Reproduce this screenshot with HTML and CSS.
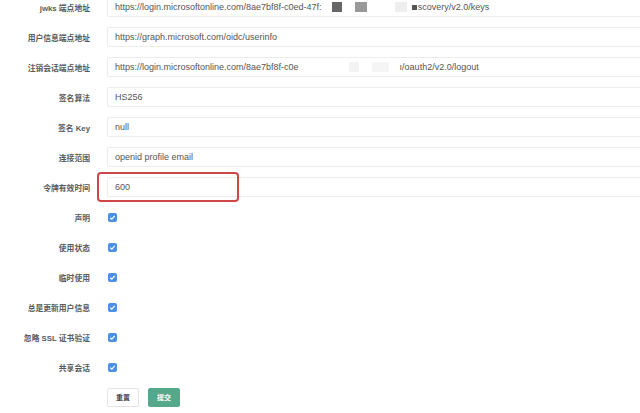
FILE: index.html
```html
<!DOCTYPE html>
<html lang="zh">
<head>
<meta charset="utf-8">
<link rel="stylesheet" href="styles.css">
</head>
<body>
<form class="form">
  <div class="row">
    <label class="label">jwks 端点地址</label>
    <div class="input"><span>https://login.microsoftonline.com/8ae7bf8f-c0ed-47f:</span><span class="blob b1"></span><span class="blob b2"></span><span class="blob b3"></span><span class="blob b4"></span><span>scovery/v2.0/keys</span></div>
  </div>
  <div class="row">
    <label class="label">用户信息端点地址</label>
    <div class="input"><span>https://graph.microsoft.com/oidc/userinfo</span></div>
  </div>
  <div class="row">
    <label class="label">注销会话端点地址</label>
    <div class="input"><span>https://login.microsoftonline.com/8ae7bf8f-c0e</span><span class="blob b5"></span><span class="blob b6"></span><span>ı/oauth2/v2.0/logout</span></div>
  </div>
  <div class="row">
    <label class="label">签名算法</label>
    <div class="input"><span>HS256</span></div>
  </div>
  <div class="row">
    <label class="label">签名 Key</label>
    <div class="input"><span>null</span></div>
  </div>
  <div class="row">
    <label class="label">连接范围</label>
    <div class="input"><span>openid profile email</span></div>
  </div>
  <div class="row highlight-row">
    <label class="label">令牌有效时间</label>
    <div class="input"><span>600</span></div>
    <div class="highlight"></div>
  </div>
  <div class="row">
    <label class="label">声明</label>
    <span class="check"><svg viewBox="0 0 8 8"><path d="M2 4.2 L3.4 5.5 L6 2.6" fill="none" stroke="#fff" stroke-width="1"/></svg></span>
  </div>
  <div class="row">
    <label class="label">使用状态</label>
    <span class="check"><svg viewBox="0 0 8 8"><path d="M2 4.2 L3.4 5.5 L6 2.6" fill="none" stroke="#fff" stroke-width="1"/></svg></span>
  </div>
  <div class="row">
    <label class="label">临时使用</label>
    <span class="check"><svg viewBox="0 0 8 8"><path d="M2 4.2 L3.4 5.5 L6 2.6" fill="none" stroke="#fff" stroke-width="1"/></svg></span>
  </div>
  <div class="row">
    <label class="label">总是更新用户信息</label>
    <span class="check"><svg viewBox="0 0 8 8"><path d="M2 4.2 L3.4 5.5 L6 2.6" fill="none" stroke="#fff" stroke-width="1"/></svg></span>
  </div>
  <div class="row">
    <label class="label">忽略 SSL 证书验证</label>
    <span class="check"><svg viewBox="0 0 8 8"><path d="M2 4.2 L3.4 5.5 L6 2.6" fill="none" stroke="#fff" stroke-width="1"/></svg></span>
  </div>
  <div class="row">
    <label class="label">共享会话</label>
    <span class="check"><svg viewBox="0 0 8 8"><path d="M2 4.2 L3.4 5.5 L6 2.6" fill="none" stroke="#fff" stroke-width="1"/></svg></span>
  </div>
  <div class="row">
    <span class="label"></span>
    <div class="buttons">
      <button type="button" class="btn btn-reset">重置</button>
      <button type="button" class="btn btn-submit">提交</button>
    </div>
  </div>
</form>
</body>
</html>
```
FILE: styles.css
```css
html, body {
  margin: 0;
  padding: 0;
  background: #fff;
  overflow: hidden;
}
body {
  width: 640px;
  height: 413px;
  font-family: "Liberation Sans", "Noto Sans CJK SC", sans-serif;
}
.form {
  display: flex;
  flex-direction: column;
  gap: 10px;
  margin-top: -3px;
}
.row {
  display: flex;
  align-items: center;
  height: 20px;
  gap: 17px;
}
.highlight-row {
  position: relative;
}
.label {
  width: 90px;
  flex: none;
  text-align: right;
  font-family: "Liberation Sans", "Noto Sans CJK SC", sans-serif;
  font-size: 7.8px;
  font-weight: 700;
  color: #5a5a5a;
  white-space: nowrap;
}
.input {
  flex: 1;
  min-width: 0;
  height: 20px;
  box-sizing: border-box;
  border: 1px solid #ececec;
  border-right: none;
  border-radius: 2px 0 0 2px;
  padding: 0 7px;
  display: flex;
  align-items: center;
  font-size: 9px;
  color: #555;
  white-space: nowrap;
  overflow: hidden;
}
.blob {
  display: inline-block;
  flex: none;
  height: 10px;
}
.b1 { width: 10px; background: #666; margin-left: 10px; }
.b2 { width: 12px; background: #999; margin-left: 13px; }
.b3 { width: 12px; background: #eee; margin-left: 28px; }
.b4 { width: 5px; height: 5px; background: #555; margin-left: 5px; margin-right: 1px; }
.b5 { width: 10px; background: #f3f3f3; margin-left: 50px; }
.b6 { width: 17px; background: #f5f5f5; margin-left: 13px; margin-right: 11px; }
.highlight {
  position: absolute;
  left: 97px;
  top: -5px;
  width: 142px;
  height: 30px;
  box-sizing: border-box;
  border: 2px solid #d0474a;
  border-radius: 4px;
}
.check {
  width: 9px;
  height: 9px;
  margin-left: 1px;
  border-radius: 2px;
  background: #4b8fe6;
  display: flex;
}
.check svg {
  width: 9px;
  height: 9px;
}
.buttons {
  display: flex;
  gap: 9px;
}
.btn {
  height: 19px;
  width: 32px;
  padding: 0;
  border-radius: 2px;
  font-family: "Liberation Sans", "Noto Sans CJK SC", sans-serif;
  font-size: 7px;
  font-weight: 700;
  cursor: pointer;
}
.btn-reset {
  background: #fff;
  border: 1px solid #e4e4e4;
  color: #444;
}
.btn-submit {
  background: #55a98a;
  border: 1px solid #55a98a;
  color: #fff;
}
```
